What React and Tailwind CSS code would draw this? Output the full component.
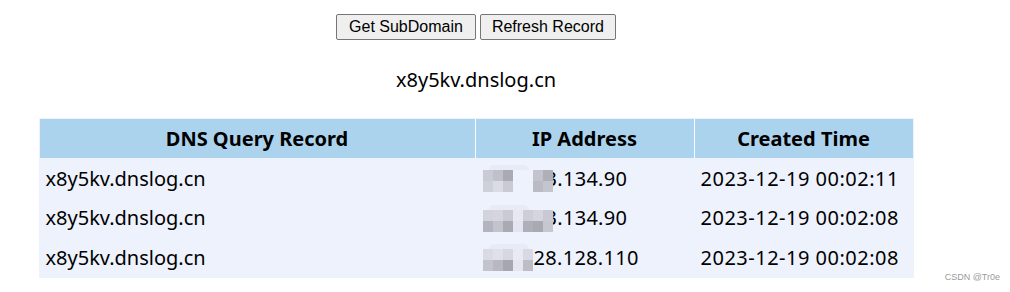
import React from 'react'

const rows = [
  { domain: 'x8y5kv.dnslog.cn', ip: '3.134.90', ipPad: 'pl-[64px]', time: '2023-12-19 00:02:11', shades: [['#c9cad4', '#bfc0ca', '#a9aab3', '', '', '#c2c3cc', '#aeafb8'], ['#cdcfd9', '#d9dbe5', '#c9cad4', '', '', '#b9bac4', '#c4c5cf']] },
  { domain: 'x8y5kv.dnslog.cn', ip: '3.134.90', ipPad: 'pl-[64px]', time: '2023-12-19 00:02:08', shades: [['#d2d3dc', '#d4d5de', '#c9cad3', '#e6e8f2', '#cdced8', '#d4d5de', '#c8c9d2'], ['#b3b4be', '#c2c3cd', '#a9aab3', '#e3e6f0', '#aeafb8', '#a8a9b2', '#c6c7d0']] },
  { domain: 'x8y5kv.dnslog.cn', ip: '28.128.110', ipPad: 'pl-[52px]', time: '2023-12-19 00:02:08', shades: [['#d9dae4', '#dfe1ea', '#d6d7e1', '#e8eaf4', '#d8d9e3', '', ''], ['#c2c3cd', '#b7b8c2', '#a5a6af', '#e4e6f0', '#bcbdc7', '', '']] },
]

function Mosaic({ shades }) {
  return (
    <div className="absolute left-[7px] top-[7px] flex flex-col">
      <div className="h-[5px] w-[40px] ml-[6px] rounded-t-md bg-[#e6ebf7]" />
      {shades.map((line, i) => (
        <div key={i} className="flex">
          {line.map((c, j) => (
            <div key={j} className="w-[10px] h-[11px]" style={{ backgroundColor: c || 'transparent' }} />
          ))}
        </div>
      ))}
    </div>
  )
}

export default function App() {
  return (
    <div className="relative w-[1010px] h-[292px] bg-white overflow-hidden">
      <div className="w-[952px] flex flex-col items-center">
        <div className="flex gap-[4px] mt-[14px]" style={{ fontFamily: '"Liberation Sans", Arial, sans-serif' }}>
          <button className="h-[26px] px-[12px] text-[16px] text-black bg-[#efefef] border border-[#767676] rounded-[2px]">Get SubDomain</button>
          <button className="h-[26px] px-[11px] text-[16px] text-black bg-[#efefef] border border-[#767676] rounded-[2px]">Refresh Record</button>
        </div>

        <div className="mt-[26px] text-[20px] leading-[28px] text-black" style={{ fontFamily: '"Noto Sans", "Open Sans", sans-serif' }}>
          x8y5kv.dnslog.cn
        </div>

        <div className="mt-[24px] w-[875px] bg-[#eef2fd] p-px text-black" style={{ fontFamily: '"Noto Sans", "Open Sans", sans-serif' }}>
          <div className="grid grid-cols-[435px_1px_218px_1px_218px] h-[39px] text-[20px] font-bold">
            <div className="bg-[#acd3ee] flex items-center justify-center">DNS Query Record</div>
            <div className="bg-white" />
            <div className="bg-[#acd3ee] flex items-center justify-center">IP Address</div>
            <div className="bg-white" />
            <div className="bg-[#acd3ee] flex items-center justify-center">Created Time</div>
          </div>
          {rows.map((r, i) => (
            <div key={i} className="grid grid-cols-[436px_219px_218px] h-[39.5px] text-[20px]">
              <div className="flex items-center px-[6px] pt-[2px]">{r.domain}</div>
              <div className="relative flex items-center px-[6px] pt-[2px] tracking-[0.3px]">
                <span className={r.ipPad}>{r.ip}</span>
                <Mosaic shades={r.shades} />
              </div>
              <div className="flex items-center px-[6px] pt-[2px] tracking-[0.5px]">{r.time}</div>
            </div>
          ))}
        </div>
      </div>

      <div className="absolute right-[10px] bottom-[8px] text-[9px] text-[#9a9a9a]" style={{ fontFamily: '"Liberation Sans", Arial, sans-serif' }}>
        CSDN @Tr0e
      </div>
    </div>
  )
}
